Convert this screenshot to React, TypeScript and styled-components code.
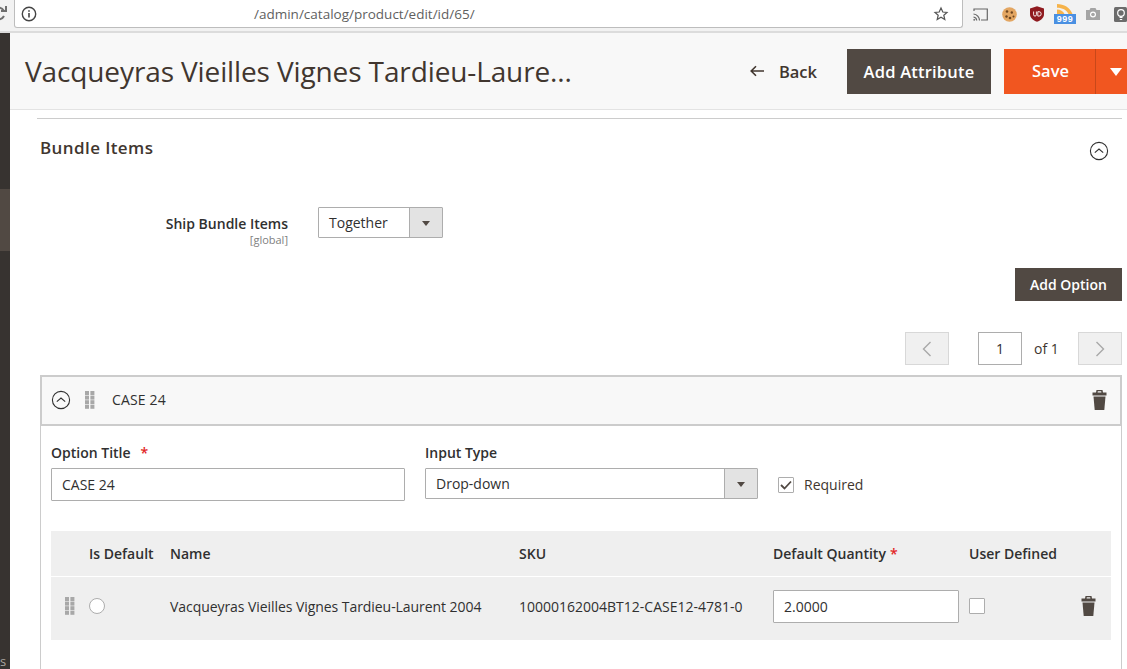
import React from "react";
import styled, { createGlobalStyle } from "styled-components";

const GlobalStyle = createGlobalStyle`
  html, body {
    margin: 0;
    padding: 0;
    background: #fff;
  }
  * {
    box-sizing: border-box;
  }
  body {
    font-family: "Open Sans", "Liberation Sans", sans-serif;
    color: #303030;
  }
`;

const Page = styled.div`
  width: 1127px;
  height: 669px;
  overflow: hidden;
  display: flex;
  flex-direction: column;
`;

/* browser chrome */
const BrowserBar = styled.div`
  height: 33px;
  flex: none;
  display: flex;
  align-items: flex-start;
  background: #f2f2f2;
  border-bottom: 2px solid #dcdcdc;
`;

const ReloadStub = styled.svg`
  width: 14px;
  height: 28px;
  flex: none;
`;

const UrlBox = styled.div`
  width: 949px;
  height: 28px;
  display: flex;
  align-items: center;
  padding: 0 13px 0 6px;
  background: #fff;
  border: 1px solid #bdbdbd;
  border-top: none;
  border-radius: 0 0 3px 3px;
`;

const UrlText = styled.span`
  margin-left: 217px;
  flex: 1;
  font-size: 13.5px;
  color: #5f5f5f;
`;

const Extensions = styled.div`
  display: flex;
  align-items: center;
  height: 28px;
  padding-left: 10px;
  flex: none;
`;

const ExtIcon = styled.span<{ $gap: number }>`
  display: flex;
  flex: none;
  margin-left: ${(p) => p.$gap}px;
`;

const RssIcon = styled(ExtIcon)`
  position: relative;
  width: 22px;
  height: 20px;
`;

const RssBadge = styled.span`
  position: absolute;
  left: 0;
  right: 0;
  bottom: 0;
  height: 10px;
  background: #4a90e2;
  color: #fff;
  font-family: "Liberation Sans", sans-serif;
  font-size: 9px;
  font-weight: 700;
  line-height: 10px;
  text-align: center;
  letter-spacing: 0.5px;
`;

const Body = styled.div`
  flex: 1;
  display: flex;
  min-height: 0;
`;

const SideStrip = styled.div`
  width: 10px;
  flex: none;
  overflow: hidden;
  padding-top: 156px;
  background: #373330;
`;

const SideActive = styled.div`
  height: 62px;
  background: #514943;
`;

const SideLabel = styled.div`
  margin-top: 402px;
  font-size: 13px;
  line-height: 16px;
  color: #aaa6a0;
`;

const Main = styled.div`
  flex: 1;
  min-width: 0;
  display: flex;
  flex-direction: column;
`;

/* page header */
const PageHeader = styled.header`
  height: 77px;
  flex: none;
  display: flex;
  align-items: center;
  padding: 0 0 0 15px;
  background: #f8f8f8;
  border-bottom: 1px solid #e3e3e3;
`;

const PageTitle = styled.h1`
  flex: 1;
  min-width: 0;
  margin: 0 0 1px;
  font-size: 28px;
  font-weight: 400;
  line-height: 36px;
  letter-spacing: -0.12px;
  color: #41362f;
`;

const BackLink = styled.span`
  display: flex;
  align-items: center;
  gap: 15px;
  margin-right: 30px;
  font-size: 16.5px;
  font-weight: 600;
  color: #41362f;
`;

const DarkButton = styled.button<{ $small?: boolean }>`
  height: ${(p) => (p.$small ? "33px" : "45px")};
  width: ${(p) => (p.$small ? "107px" : "144px")};
  flex: none;
  padding: 0;
  border: none;
  background: #514943;
  color: #fff;
  font-family: inherit;
  font-size: ${(p) => (p.$small ? "14px" : "16.5px")};
  letter-spacing: ${(p) => (p.$small ? "0" : "0.2px")};
  font-weight: 600;
`;

const SaveGroup = styled.div`
  display: flex;
  height: 45px;
  margin-left: 13px;
  margin-right: -9px;
  background: #f15620;
  color: #fff;
  width: 132px;
  flex: none;
`;

const SaveLabel = styled.span`
  width: 92px;
  display: flex;
  align-items: center;
  justify-content: center;
  padding: 0 0 2px 2px;
  font-size: 16.5px;
  font-weight: 600;
  border-right: 1px solid #c8481a;
`;

const SaveCaret = styled.span`
  flex: 1;
  display: flex;
  align-items: center;
  justify-content: center;
  &::before {
    content: "";
    border-left: 6px solid transparent;
    border-right: 6px solid transparent;
    border-top: 8px solid #fff;
    margin-top: 2px;
  }
`;

/* content */
const Content = styled.div`
  flex: 1;
  min-height: 0;
  padding: 8px 5px 0 27px;
`;

const Section = styled.section`
  border-top: 1px solid #cccccc;
  height: 100%;
`;

const SectionHead = styled.div`
  display: flex;
  justify-content: space-between;
  padding: 17px 13px 0 3px;
`;

const SectionTitle = styled.h2`
  margin: 0;
  font-size: 17px;
  font-weight: 600;
  line-height: 24px;
  letter-spacing: 0.4px;
  color: #41362f;
`;

const CollapseCircle = styled.svg<{ $top?: number }>`
  width: 20px;
  height: 20px;
  flex: none;
  margin-top: ${(p) => p.$top ?? 0}px;
`;

const ShipRow = styled.div`
  display: flex;
  margin-top: 46px;
`;

const ShipLabel = styled.div`
  width: 281px;
  padding: 7px 30px 0 0;
  text-align: right;
  font-size: 14px;
  font-weight: 600;
  line-height: 19px;
  color: #303030;
`;

const Scope = styled.div`
  margin-top: 1px;
  font-size: 11px;
  font-weight: 400;
  line-height: 12px;
  color: #808080;
`;

const SelectBox = styled.div<{ $width: number }>`
  width: ${(p) => p.$width}px;
  height: 31px;
  display: flex;
  align-items: center;
  padding-left: 10px;
  background: #fff;
  border: 1px solid #adadad;
  border-radius: 1px;
  font-size: 14px;
  color: #303030;
`;

const SelectValue = styled.span`
  flex: 1;
`;

const SelectArrow = styled.span`
  width: 33px;
  height: 100%;
  display: flex;
  align-items: center;
  justify-content: center;
  background: #e3e3e3;
  border-left: 1px solid #adadad;
  &::before {
    content: "";
    border-left: 4px solid transparent;
    border-right: 4px solid transparent;
    border-top: 5px solid #514943;
    margin-top: 2px;
  }
`;

const ActionsRow = styled.div`
  display: flex;
  justify-content: flex-end;
  margin-top: 22px;
`;

const Pager = styled.div`
  display: flex;
  align-items: center;
  justify-content: flex-end;
  margin-top: 31px;
  font-size: 14px;
`;

const PagerButton = styled.div<{ $dir: "prev" | "next" }>`
  width: 44px;
  height: 33px;
  display: flex;
  align-items: center;
  justify-content: center;
  background: #f0f0f0;
  border: 1px solid #d8d8d8;
  margin-right: ${(p) => (p.$dir === "prev" ? "29px" : "0")};
`;

const PagerInput = styled.div`
  width: 44px;
  height: 33px;
  display: flex;
  align-items: center;
  justify-content: center;
  border: 1px solid #adadad;
  background: #fff;
`;

const PagerTotal = styled.span`
  width: 56px;
  padding-left: 12px;
  color: #41362f;
`;

/* option panel */
const OptionPanel = styled.div`
  margin: 10px 0 0 3px;
  height: 400px;
  border-left: 1px solid #cccccc;
  border-right: 1px solid #cccccc;
`;

const OptionHead = styled.div`
  height: 51px;
  display: flex;
  align-items: center;
  padding: 0 13px 2px 9px;
  background: #f8f8f8;
  border: 2px solid #cccccc;
  margin: 0 -1px;
  font-size: 14px;
  color: #303030;
`;

const OptionName = styled.span`
  flex: 1;
  margin-left: 17px;
  letter-spacing: 0.15px;
`;

const Grip = styled.svg`
  width: 10px;
  height: 18px;
  flex: none;
  fill: #a8a8a8;
`;

const HeadGrip = styled(Grip)`
  margin-left: 14px;
`;

const OptionBody = styled.div`
  padding: 17px 10px 0;
`;

const FieldRow = styled.div`
  display: flex;
  align-items: flex-start;
  gap: 20px;
`;

const Field = styled.div<{ $width: number }>`
  width: ${(p) => p.$width}px;
  flex: none;
`;

const FieldLabel = styled.div`
  height: 25px;
  font-size: 14px;
  font-weight: 600;
  line-height: 20px;
  color: #303030;
`;

const Star = styled.span<{ $gap: number }>`
  margin-left: ${(p) => p.$gap}px;
  color: #e22626;
  font-weight: 600;
`;

const TextInput = styled.div<{ $width?: number }>`
  width: ${(p) => (p.$width ? `${p.$width}px` : "100%")};
  height: 33px;
  display: flex;
  align-items: center;
  padding-left: 10px;
  background: #fff;
  border: 1px solid #adadad;
  border-radius: 1px;
  font-size: 14px;
  color: #303030;
`;

const RequiredField = styled.div`
  display: flex;
  align-items: center;
  gap: 10px;
  height: 33px;
  margin-top: 25px;
  font-size: 14px;
  color: #41362f;
`;

const CheckBox = styled.span`
  width: 16px;
  height: 16px;
  flex: none;
  display: flex;
  align-items: center;
  justify-content: center;
  background: #fff;
  border: 1px solid #adadad;
  border-radius: 1px;
`;

const ItemsTable = styled.div`
  margin-top: 30px;
  background: #efefef;
  height: 109px;
`;

const TableHeadRow = styled.div`
  height: 46px;
  display: grid;
  grid-template-columns: 38px 81px 349px 254px 196px 142px;
  align-items: center;
  border-bottom: 1px solid #fff;
  font-size: 14px;
  font-weight: 600;
  color: #303030;
`;

const TableRow = styled.div`
  height: 63px;
  padding-bottom: 5px;
  display: grid;
  grid-template-columns: 38px 81px 349px 254px 196px 112px 30px;
  align-items: center;
  font-size: 14px;
  color: #303030;
`;

const ProductName = styled.span`
  letter-spacing: -0.06px;
`;

const RowGrip = styled(Grip)`
  margin-left: 14px;
`;

const Radio = styled.span`
  width: 16px;
  height: 16px;
  display: block;
  background: #fff;
  border: 1px solid #adadad;
  border-radius: 50%;
`;

const TrashSvg = styled.svg`
  width: 15px;
  height: 20px;
  flex: none;
  fill: #514943;
`;

const Collapse = ({ top }: { top?: number }) => (
  <CollapseCircle $top={top} viewBox="0 0 20 20" fill="none" stroke="#303030">
    <circle cx="10" cy="10" r="8.6" strokeWidth="1.1" />
    <path d="M5.8 11.6 L10 8 L14.2 11.6" strokeWidth="1.1" />
  </CollapseCircle>
);

const GripDots = () => (
  <>
    {[0, 4.6, 9.2, 13.8].map((y) => (
      <g key={y}>
        <rect x="0" y={y} width="4" height="4" />
        <rect x="5.4" y={y} width="4" height="4" />
      </g>
    ))}
  </>
);

const Trash = () => (
  <TrashSvg viewBox="0 0 15 20">
    <path d="M4.500 0h6l.5 2.500h3.500V5.500H.5V2.500H4zM5.800 1.200l-.2 1.300h3.800l-.2-1.300z" fillRule="evenodd" />
    <path d="M1.500 6.500h12L12.300 20H2.700z" />
  </TrashSvg>
);

const App = () => {
  return (
    <Page>
      <GlobalStyle />
      <BrowserBar>
        <ReloadStub viewBox="0 0 14 28" fill="none" stroke="#6e6e6e" strokeWidth="2">
          <path d="M-3 8a6 6 0 0 1 7 3M-3 19a6 6 0 0 0 7-3M1 11h5V6" />
        </ReloadStub>
        <UrlBox>
          <svg width="16" height="16" viewBox="0 0 16 16" fill="none" stroke="#444">
            <circle cx="8" cy="8" r="6.700" strokeWidth="1.400" />
            <path d="M8 7v4.500M8 4.300v1.400" strokeWidth="1.600" />
          </svg>
          <UrlText>/admin/catalog/product/edit/id/65/</UrlText>
          <svg width="16" height="16" viewBox="0 0 16 16" fill="none" stroke="#555" strokeWidth="1.2">
            <path d="M8 2l1.800 4 4.200.4-3.200 2.800 1 4.300L8 11.200 4.200 13.500l1-4.300L2 6.400 6.200 6z" />
          </svg>
        </UrlBox>
        <Extensions>
          <ExtIcon $gap={0}>
            <svg width="15" height="13" viewBox="0 0 15 13" fill="none" stroke="#666" strokeWidth="1.2">
              <path d="M1 3V1h13.300v11H8M.5 6a6.500 6.500 0 0 1 6 6.500M.5 9a3.700 3.700 0 0 1 3.200 3.500" />
              <circle cx="1.200" cy="11.800" r="0.900" fill="#666" stroke="none" />
            </svg>
          </ExtIcon>
          <ExtIcon $gap={14}>
            <svg width="15" height="15" viewBox="0 0 15 15">
              <circle cx="7.500" cy="7.500" r="7.300" fill="#e3a662" />
              <circle cx="5" cy="4.500" r="1.300" fill="#6e4620" />
              <circle cx="9.800" cy="5.500" r="1.200" fill="#6e4620" />
              <circle cx="4.500" cy="9.500" r="1.200" fill="#6e4620" />
              <circle cx="8" cy="11" r="1.300" fill="#6e4620" />
              <circle cx="11.500" cy="9.500" r="1" fill="#6e4620" />
            </svg>
          </ExtIcon>
          <ExtIcon $gap={13}>
            <svg width="14" height="16" viewBox="0 0 14 16">
              <path d="M0 2.500 7 .2 14 2.500V8c0 4-3 6.300-7 7.800C3 14.300 0 12 0 8z" fill="#8f1a1f" />
              <path d="M3.600 5.500v3.200a1.400 1.400 0 0 0 2.800 0V5.500M7.800 5.700h1.200a2 2 0 0 1 0 4.400H7.800z" fill="none" stroke="#fff" strokeWidth="0.900" />
            </svg>
          </ExtIcon>
          <RssIcon $gap={10}>
            <svg width="22" height="11" viewBox="0 0 22 11">
              <path d="M3 0c7 0 13 3.500 15.500 10h-4C12.500 6 8.500 3.800 3 3.800zM3 5.500c3.500 0 6 1.500 7.500 4.500H3z" fill="#f6b34a" />
            </svg>
            <RssBadge>999</RssBadge>
          </RssIcon>
          <ExtIcon $gap={10}>
            <svg width="14" height="12" viewBox="0 0 14 12">
              <path d="M0 2h3.500L4.500 0h5l1 2H14v10H0z" fill="#a5a5a5" />
              <circle cx="7" cy="6.500" r="3" fill="#fff" />
              <circle cx="7" cy="6.500" r="1.800" fill="#a5a5a5" />
            </svg>
          </ExtIcon>
          <ExtIcon $gap={14}>
            <svg width="13" height="15" viewBox="0 0 13 15">
              <rect x="0" y="0" width="13" height="15" rx="1.500" fill="#6c6c6c" />
              <circle cx="7" cy="6" r="3.300" fill="none" stroke="#fff" strokeWidth="1.200" />
              <path d="M5.500 10.500h3M5.800 12.500h2.400" stroke="#fff" />
            </svg>
          </ExtIcon>
        </Extensions>
      </BrowserBar>
      <Body>
        <SideStrip>
          <SideActive />
          <SideLabel>s</SideLabel>
        </SideStrip>
        <Main>
          <PageHeader>
            <PageTitle>Vacqueyras Vieilles Vignes Tardieu-Laure...</PageTitle>
            <BackLink>
              <svg width="14" height="12" viewBox="0 0 14 12" fill="none" stroke="#41362f" strokeWidth="1.6">
                <path d="M14 6H1.500M6 1.200 1.200 6 6 10.800" />
              </svg>
              Back
            </BackLink>
            <DarkButton>Add Attribute</DarkButton>
            <SaveGroup>
              <SaveLabel>Save</SaveLabel>
              <SaveCaret />
            </SaveGroup>
          </PageHeader>
          <Content>
            <Section>
              <SectionHead>
                <SectionTitle>Bundle Items</SectionTitle>
                <Collapse top={5} />
              </SectionHead>
              <ShipRow>
                <ShipLabel>
                  Ship Bundle Items
                  <Scope>[global]</Scope>
                </ShipLabel>
                <SelectBox $width={125}>
                  <SelectValue>Together</SelectValue>
                  <SelectArrow />
                </SelectBox>
              </ShipRow>
              <ActionsRow>
                <DarkButton $small>Add Option</DarkButton>
              </ActionsRow>
              <Pager>
                <PagerButton $dir="prev">
                  <svg width="10" height="16" viewBox="0 0 10 16" fill="none" stroke="#a8a8a8" strokeWidth="1.4">
                    <path d="M8.500 1 1.500 8l7 7" />
                  </svg>
                </PagerButton>
                <PagerInput>1</PagerInput>
                <PagerTotal>of 1</PagerTotal>
                <PagerButton $dir="next">
                  <svg width="10" height="16" viewBox="0 0 10 16" fill="none" stroke="#a8a8a8" strokeWidth="1.4">
                    <path d="M1.500 1l7 7-7 7" />
                  </svg>
                </PagerButton>
              </Pager>
              <OptionPanel>
                <OptionHead>
                  <Collapse />
                  <HeadGrip viewBox="0 0 10 18">
                    <GripDots />
                  </HeadGrip>
                  <OptionName>CASE 24</OptionName>
                  <Trash />
                </OptionHead>
                <OptionBody>
                  <FieldRow>
                    <Field $width={354}>
                      <FieldLabel>
                        Option Title<Star $gap={10}>*</Star>
                      </FieldLabel>
                      <TextInput>CASE 24</TextInput>
                    </Field>
                    <Field $width={333}>
                      <FieldLabel>Input Type</FieldLabel>
                      <SelectBox $width={333}>
                        <SelectValue>Drop-down</SelectValue>
                        <SelectArrow />
                      </SelectBox>
                    </Field>
                    <RequiredField>
                      <CheckBox>
                        <svg width="12" height="10" viewBox="0 0 12 10" fill="none" stroke="#514943" strokeWidth="1.800">
                          <path d="M1 5l3.500 3.500L11 1.500" />
                        </svg>
                      </CheckBox>
                      Required
                    </RequiredField>
                  </FieldRow>
                  <ItemsTable>
                    <TableHeadRow>
                      <span />
                      <span>Is Default</span>
                      <span>Name</span>
                      <span>SKU</span>
                      <span>
                        Default Quantity<Star $gap={4}>*</Star>
                      </span>
                      <span>User Defined</span>
                    </TableHeadRow>
                    <TableRow>
                      <RowGrip viewBox="0 0 10 18">
                        <GripDots />
                      </RowGrip>
                      <Radio />
                      <ProductName>Vacqueyras Vieilles Vignes Tardieu-Laurent 2004</ProductName>
                      <span>10000162004BT12-CASE12-4781-0</span>
                      <TextInput $width={186}>2.0000</TextInput>
                      <CheckBox />
                      <Trash />
                    </TableRow>
                  </ItemsTable>
                </OptionBody>
              </OptionPanel>
            </Section>
          </Content>
        </Main>
      </Body>
    </Page>
  );
};

export default App;
